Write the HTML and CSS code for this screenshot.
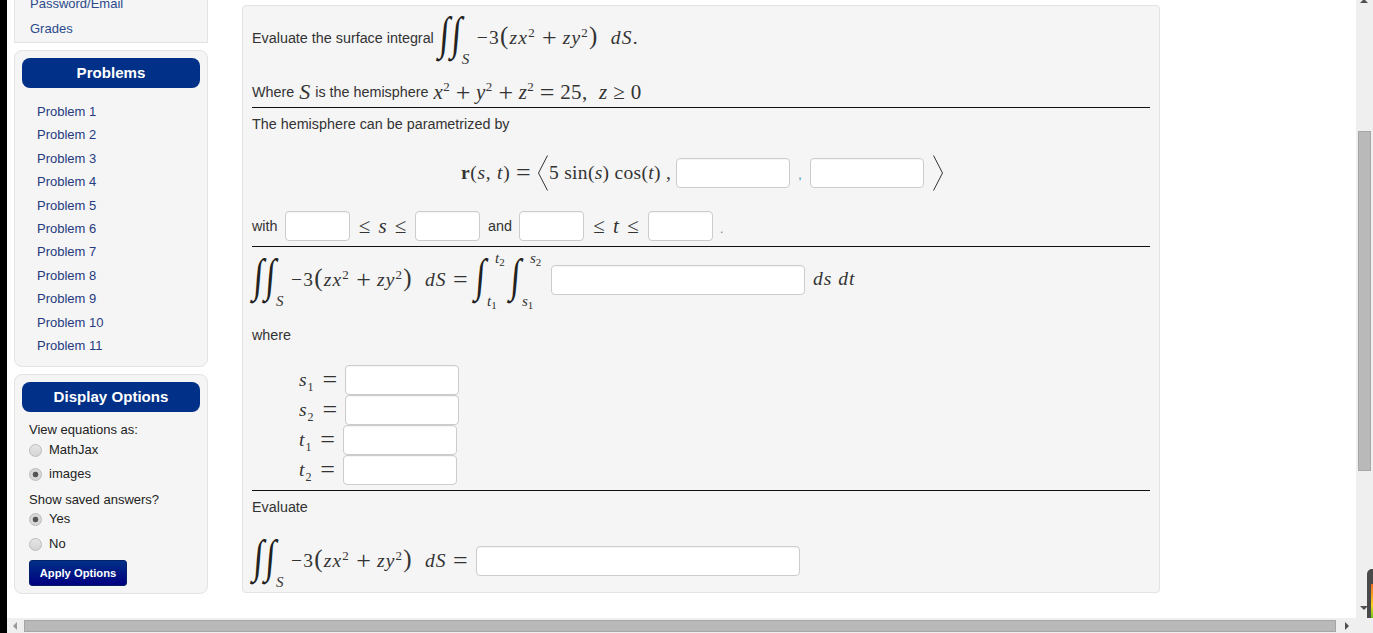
FILE: index.html
```html
<!DOCTYPE html>
<html lang="en">
<head>
<meta charset="utf-8">
<title>Surface integral</title>
<link rel="stylesheet" href="styles.css">
</head>
<body>
<div class="window">
  <div class="strip"></div>
  <div class="column">
  <div class="top">
    <div class="viewport">
      <aside class="sidebar">
        <nav class="panel panel-links">
          <a class="link">Password/Email</a>
          <a class="link">Grades</a>
        </nav>
        <section class="panel panel-round panel-problems">
          <h2 class="heading">Problems</h2>
          <ul class="problems">
            <li>Problem 1</li><li>Problem 2</li><li>Problem 3</li><li>Problem 4</li>
            <li>Problem 5</li><li>Problem 6</li><li>Problem 7</li><li>Problem 8</li>
            <li>Problem 9</li><li>Problem 10</li><li>Problem 11</li>
          </ul>
        </section>
        <section class="panel panel-round panel-options">
          <h2 class="heading">Display Options</h2>
          <div class="options">
            <div class="opt-label first">View equations as:</div>
            <label class="opt opt-a"><input class="radio" type="radio" name="eq"><span>MathJax</span></label>
            <label class="opt opt-b"><input class="radio" type="radio" name="eq" checked><span>images</span></label>
            <div class="opt-label second">Show saved answers?</div>
            <label class="opt opt-c"><input class="radio" type="radio" name="sv" checked><span>Yes</span></label>
            <label class="opt opt-d"><input class="radio" type="radio" name="sv"><span>No</span></label>
            <button class="apply" type="button">Apply Options</button>
          </div>
        </section>
      </aside>
      <main class="problem">
        <div class="row r1">
          <span class="txt">Evaluate the surface integral</span>
          <span class="math ml5">
            <span class="int int-a">∫</span><span class="int int-b">∫</span><i class="sub-s">S</i>
            <span class="m-body">−3<span class="paren">(</span><i>zx</i><sup>2</sup> <span class="op">+</span> <i>zy</i><sup>2</sup><span class="paren">)</span>&nbsp;&nbsp;<i>dS</i></span><span class="period">.</span>
          </span>
        </div>
        <div class="row r2">
          <span class="txt">Where</span>
          <i class="math-inline s-var">S</i>
          <span class="txt">is the hemisphere</span>
          <span class="math-inline eqn"><i>x</i><sup>2</sup> <span class="op">+</span> <i>y</i><sup>2</sup> <span class="op">+</span> <i>z</i><sup>2</sup> <span class="op">=</span> 25,&nbsp;&nbsp;<i>z</i> ≥ 0</span>
        </div>
        <hr class="rule">
        <div class="row r3"><span class="txt">The hemisphere can be parametrized by</span></div>
        <div class="row r4">
          <span class="math-inline rst"><b>r</b>(<i>s</i>, <i>t</i>) <span class="op">=</span></span>
          <svg class="angle" viewBox="0 0 12 36" aria-hidden="true"><path d="M10.5 .5 1.5 18l9 17.500"/></svg>
          <span class="math-inline five">5 sin(<i>s</i>) cos(<i>t</i>) ,</span>
          <input class="box w114" type="text">
          <span class="comma">,</span>
          <input class="box w114" type="text">
          <svg class="angle angle-r" viewBox="0 0 12 36" aria-hidden="true"><path d="M1.500 .5l9 17.500-9 17.500"/></svg>
        </div>
        <div class="row r5">
          <span class="txt with">with</span>
          <input class="box w65" type="text">
          <span class="math-inline rel">≤ <i>s</i> ≤</span>
          <input class="box w65" type="text">
          <span class="txt g-and">and</span>
          <input class="box w65" type="text">
          <span class="math-inline rel rel-t">≤ <i>t</i> ≤</span>
          <input class="box w65" type="text">
          <span class="dot">.</span>
        </div>
        <hr class="rule">
        <div class="row r6">
          <span class="math w-eq">
            <span class="int int-a">∫</span><span class="int int-b">∫</span><i class="sub-s">S</i>
            <span class="m-body">−3<span class="paren">(</span><i>zx</i><sup>2</sup> <span class="op">+</span> <i>zy</i><sup>2</sup><span class="paren">)</span>&nbsp;&nbsp;<i>dS</i> <span class="op">=</span></span>
          </span>
          <span class="limits l1"><span class="int int-single">∫</span><i class="up"><span>t</span><small>2</small></i><i class="lo"><span>t</span><small>1</small></i></span>
          <span class="limits l2"><span class="int int-single">∫</span><i class="up"><span>s</span><small>2</small></i><i class="lo"><span>s</span><small>1</small></i></span>
          <input class="box w254" type="text">
          <span class="math-inline dsdt"><i>ds dt</i></span>
        </div>
        <div class="row r7"><span class="txt">where</span></div>
        <div class="bounds">
          <div class="row bound b-s"><span class="math-inline lhs"><i>s</i><sub>1</sub> <span class="op">=</span></span><input class="box w114" type="text"></div>
          <div class="row bound b-s"><span class="math-inline lhs"><i>s</i><sub>2</sub> <span class="op">=</span></span><input class="box w114" type="text"></div>
          <div class="row bound b-t"><span class="math-inline lhs"><i>t</i><sub>1</sub> <span class="op">=</span></span><input class="box w114" type="text"></div>
          <div class="row bound b-t"><span class="math-inline lhs"><i>t</i><sub>2</sub> <span class="op">=</span></span><input class="box w114" type="text"></div>
        </div>
        <hr class="rule rule-last">
        <div class="row r3"><span class="txt">Evaluate</span></div>
        <div class="row r8">
          <span class="math w-eq2">
            <span class="int int-a">∫</span><span class="int int-b">∫</span><i class="sub-s">S</i>
            <span class="m-body">−3<span class="paren">(</span><i>zx</i><sup>2</sup> <span class="op">+</span> <i>zy</i><sup>2</sup><span class="paren">)</span>&nbsp;&nbsp;<i>dS</i> <span class="op">=</span></span>
          </span>
          <input class="box w324" type="text">
        </div>
      </main>
    </div>
    <div class="vscroll">
      <span class="arrow-up"></span>
      <span class="v-thumb"></span>
      <span class="arrow-down"></span>
    </div>
    <div class="meter"><span class="meter-fill"></span></div>
  </div>
  <div class="hscroll">
    <span class="arrow-left"></span>
    <span class="h-thumb"></span>
    <span class="arrow-right"></span>
  </div>
  </div>
</div>
</body>
</html>
```
FILE: styles.css
```css
* { box-sizing: border-box; }
html, body { margin: 0; padding: 0; height: 100%; overflow: hidden; background: #fff; }
body { font-family: "Liberation Sans", Arial, sans-serif; font-size: 14px; color: #333; }

.window { width: 1373px; height: 633px; display: flex; overflow: hidden; }
.strip { width: 7px; background: #000; flex: none; }
.column { width: 1366px; display: flex; flex-direction: column; flex: none; }
.top { position: relative; display: flex; height: 618px; }
.viewport { width: 1349px; display: flex; align-items: flex-start; overflow: hidden; }

/* sidebar */
.sidebar { width: 194px; margin-left: 7px; margin-top: -17px; flex: none; display: flex; flex-direction: column; }
.panel { background: #f5f5f5; border: 1px solid #e3e3e3; }
.panel-links { height: 60px; padding: 8px 0 0 15px; border-top: 0; display: flex; flex-direction: column; }
.link { height: 25px; line-height: 25px; font-size: 13px; color: #2b4a8c; }
.panel-round { border-radius: 8px; padding: 7px; }
.panel-problems { margin-top: 7px; height: 317px; }
.panel-options { margin-top: 7px; height: 220px; }
.heading { margin: 0; height: 30px; line-height: 30px; border-radius: 8px; background: #003087; color: #fff; text-align: center; font-size: 15.100px; font-weight: bold; }
.problems { list-style: none; margin: 12px 0 0; padding: 0 0 0 15px; }
.problems li { height: 23.400px; line-height: 23.400px; font-size: 13px; color: #263a80; }
.options { padding: 0; }
.opt-label { font-size: 13px; line-height: 16px; color: #222; margin-left: 7px; }
.opt-label.first { margin-top: 10px; }
.opt-label.second { margin-top: 11px; }
.opt { display: flex; align-items: center; height: 16px; margin-left: 7px; font-size: 13px; color: #222; }
.opt-a { margin-top: 3px; }
.opt-b { margin-top: 8px; }
.opt-c { margin-top: 2px; }
.opt-d { margin-top: 9px; }
.radio { appearance: none; width: 13px; height: 13px; margin: 2px 7px 0 0; border: 1px solid #bbb; border-radius: 50%; background: linear-gradient(#e6e6e6, #d4d4d4); flex: none; }
.radio:checked { background: radial-gradient(circle, #555 0 2.500px, #d8d8d8 3.200px); }
.apply { display: block; width: 98px; height: 26px; margin: 9px 0 0 7px; padding: 0; border: 1px solid #00206a; border-radius: 3px; background: linear-gradient(#003087, #000080); color: #fff; font: bold 11.200px "Liberation Sans", Arial, sans-serif; }

/* problem */
.problem { width: 918px; height: 588px; margin: 5px 0 0 34px; padding: 0 9px; flex: none; background: #f5f5f5; border: 1px solid #e3e3e3; border-radius: 4px; }
.row { display: flex; align-items: center; }
.txt { font-size: 14.350px; line-height: 20px; white-space: nowrap; color: #333; }
.rule { height: 1px; margin: 0; border: 0; background: #111; }
.r1 { height: 64px; }
.r2 { height: 30px; margin-top: 7px; }
.r3 { height: 32px; }
.r4 { height: 66px; padding-left: 209px; }
.r5 { height: 40px; }
.r6 { height: 66px; }
.r7 { height: 24px; margin-top: 10px; }
.bounds { margin-top: 18px; padding-left: 47px; }
.bound { height: 30px; }
.r8 { height: 64px; margin-top: 6px; }
.rule-last { margin-top: 5px; }

.math, .math-inline { font-family: "Liberation Serif", "DejaVu Serif", serif; font-size: 19.500px; color: #333; white-space: nowrap; }
.math { position: relative; display: inline-flex; align-items: center; height: 60px; padding-left: 39px; letter-spacing: 1.200px; flex: none; }
.ml5 { margin-left: 4px; }
.w-eq { width: 223px; }
.w-eq2 { width: 224px; }
.m-body { line-height: 24px; }
.paren { font-size: 25px; line-height: 20px; }
.op { font-size: 26px; line-height: 0; vertical-align: -2px; letter-spacing: 0; }
sup, sub { font-size: 13px; line-height: 0; }
sub { font-size: 12px; }
.period { font-size: 19.500px; }
.int { font-family: "Liberation Serif", serif; font-size: 42px; line-height: 1; color: #222; letter-spacing: 0; transform: scale(.82, 1.100) skewX(-6deg); }
.int-a { position: absolute; left: 1px; top: 5px; }
.int-b { position: absolute; left: 13px; top: 5px; }
.sub-s { position: absolute; left: 24px; top: 43px; font-size: 15px; }
.s-var { margin: 0 5px; font-size: 22px; }
.eqn { margin-left: 5px; font-size: 21px; letter-spacing: .4px; }
.rst { width: 70px; letter-spacing: .7px; flex: none; }
.angle { width: 12px; height: 36px; margin: 0 0 0 6px; flex: none; }
.angle path { fill: none; stroke: #333; stroke-width: 1; }
.angle-r { margin: 0 0 0 8px; }
.five { width: 127px; letter-spacing: .3px; flex: none; }
.comma { width: 20px; text-align: center; color: #2f7fc1; font-size: 12px; margin-top: 4px; }
.box { height: 30px; padding: 0; background: #fff; border: 1px solid #ccc; border-radius: 4px; flex: none; box-shadow: inset 0 1px 1px rgba(0,0,0,.04); }
.w65 { width: 65px; }
.w114 { width: 114px; }
.w254 { width: 254px; }
.w324 { width: 324px; }
.with { width: 33px; }
.rel { width: 65px; text-align: center; font-size: 21px; word-spacing: 3px; flex: none; }
.rel-t { width: 64px; }
.g-and { width: 39px; padding-left: 8px; }
.dot { margin-left: 7px; font-size: 12px; color: #777; margin-top: 6px; }
.limits { position: relative; display: block; width: 35px; height: 60px; font-family: "Liberation Serif", serif; color: #333; flex: none; }
.l2 { width: 41px; }
.int-single { position: absolute; left: 0; top: 5px; }
.up, .lo { position: absolute; left: 20px; display: flex; font-size: 15px; line-height: 14px; }
.up { top: 1px; }
.lo { top: 44px; left: 12px; }
.l2 .up { left: 20px; }
.l2 .lo { left: 12px; }
.up small, .lo small { font-size: 11px; font-style: normal; margin-top: 4px; }
.dsdt { margin: -3px 0 0 8px; letter-spacing: 1px; }
.lhs { width: 46px; font-size: 19.500px; letter-spacing: 1px; word-spacing: 2px; flex: none; }
.b-t .lhs { width: 44px; }

/* chrome */
.vscroll { position: relative; width: 17px; flex: none; background: #efefef; }
.v-thumb { position: absolute; left: 2px; top: 131px; width: 13px; height: 340px; background: #b9b9b9; border: 1px solid #a6a6a6; }
.arrow-up { position: absolute; left: 4px; top: -1px; border: 4px solid transparent; border-top: 0; border-bottom: 4px solid #505050; }
.arrow-down { position: absolute; left: 4px; top: 606px; border: 4px solid transparent; border-bottom: 0; border-top: 4px solid #505050; }
.meter { position: absolute; left: 1360px; top: 569px; width: 12px; height: 60px; border-radius: 5px; background: #4a4a4a; padding: 15px 0 6px 4px; }
.meter-fill { display: block; width: 9px; height: 100%; background: linear-gradient(#f06a1e, #f4d51f 55%, #35c71e); }
.hscroll { position: relative; height: 15px; background: #efefef; }
.h-thumb { position: absolute; left: 17px; top: 2px; width: 1312px; height: 12px; background: #b9b9b9; border: 1px solid #a6a6a6; }
.arrow-left { position: absolute; left: 6px; top: 4px; border: 4px solid transparent; border-left: 0; border-right: 4px solid #9a9a9a; }
.arrow-right { position: absolute; left: 1338px; top: 4px; border: 4px solid transparent; border-right: 0; border-left: 4px solid #505050; }
```
